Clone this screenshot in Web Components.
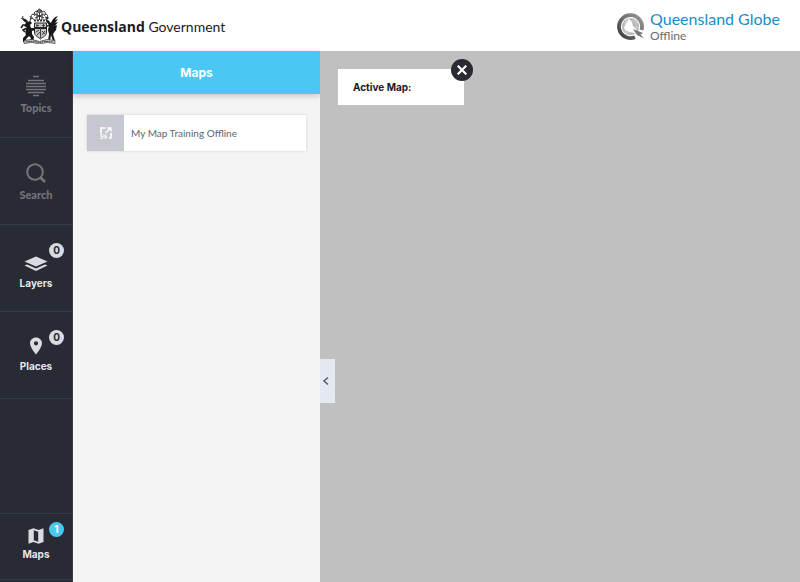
<!DOCTYPE html>
<html lang="en">
<head>
<meta charset="utf-8">
<meta name="viewport" content="width=device-width, initial-scale=1">
<title>Queensland Globe</title>
<style>
body {
	margin: 0;
	font-family: Lato, "Open Sans", sans-serif;
	font-size: 11px;
	line-height: 16px;
	--color-brand: #4bc7f4;
	--color-dark: #282b33;
	--color-light: #d9dbe3;
}
</style>
</head>
<body>
<globe-app></globe-app>

<template id="globe-app">
<style>
:host {
	display: flex;
	flex-direction: column;
	min-height: 100vh;
}
main {
	flex: 1;
	display: flex;
}
nav {
	display: flex;
	flex-direction: column;
	flex: 0 0 73px;
	box-sizing: border-box;
	padding-bottom: 2px;
	border-right: 1px solid #3a3d46;
	background: var(--color-dark);
}
nav-item:last-child {
	margin-top: auto;
}
</style>
<globe-header></globe-header>
<main>
	<nav aria-label="Tools">
		<nav-item label="Topics" muted>
			<svg width="22" height="22" viewBox="0 0 22 22" stroke="currentColor" stroke-width="1.5">
				<path d="M8 1.500H14M3 5.500H19M1 8.500H21M1 11.500H21M1 14.500H21M3 17.500H19M8 20.500H14" />
			</svg>
		</nav-item>
		<nav-item label="Search" muted>
			<svg width="22" height="22" viewBox="0 0 22 22" fill="none" stroke="currentColor" stroke-width="2">
				<circle cx="10" cy="10" r="7.800" />
				<path d="M15.500 15.500 20 20" stroke-width="2.600" />
			</svg>
		</nav-item>
		<nav-item label="Layers" count="0" wide low>
			<svg width="24" height="16" viewBox="0 0 24 16" fill="currentColor">
				<path d="M12 .5 23.500 5.500 12 10.500 .5 5.500ZM.5 9.500 3 8.400 12 12.400 21 8.400 23.500 9.500 12 15Z" />
			</svg>
		</nav-item>
		<nav-item label="Places" count="0" wide>
			<svg width="14" height="18" viewBox="0 0 14 18" fill="currentColor" fill-rule="evenodd">
				<path d="M7 .5C3.600.5 1 3 1 6.300 1 10.500 7 17.500 7 17.500S13 10.500 13 6.300C13 3 10.400.5 7 .5ZM7 4.200A2.100 2.100 0 1 1 7 8.400 2.100 2.100 0 0 1 7 4.200Z" />
			</svg>
		</nav-item>
		<nav-item label="Maps" count="1" wide active>
			<svg width="16" height="16" viewBox="0 0 16 16" fill="currentColor" fill-rule="evenodd">
				<path d="M.5 2 5.500.3 10.500 2 15.500.3V14L10.500 15.700 5.500 14 .5 15.700ZM5.800 2.300V12.200L10.200 13.700V3.800Z" />
			</svg>
		</nav-item>
	</nav>
	<map-panel heading="Maps">
		<map-card>My Map Training Offline</map-card>
	</map-panel>
	<map-view>
		<active-map>Active Map:</active-map>
	</map-view>
</main>
</template>

<template id="globe-header">
<style>
:host {
	display: block;
	background: #fff;
}
header {
	display: flex;
	justify-content: space-between;
	align-items: center;
	height: 51px;
	padding: 0 20px;
}
a {
	display: flex;
	align-items: center;
	text-decoration: none;
	font-family: Lato, sans-serif;
}
.government {
	gap: 2px;
	color: #1c1c1c;
	font-size: 14px;
	line-height: 20px;
}
.government span {
	padding-top: 3px;
}
.government b {
	font-family: "Open Sans", sans-serif;
}
.globe {
	gap: 5px;
	padding-top: 2px;
	color: #1a8dc9;
	font-size: 16px;
}
.title {
	display: flex;
	flex-direction: column;
	line-height: 18px;
}
small {
	color: #6a6a6a;
	font-size: 12px;
	line-height: 16px;
}
svg {
	display: block;
}
</style>
<header>
	<a class="government" href="#">
		<svg width="39" height="36" viewBox="0 0 39 36" aria-hidden="true">
			<!-- crest and mantling -->
			<g fill="none" stroke="#333" stroke-width="1">
				<path d="M14 11.500C10 10 11 5 14 6.500M15 8C13 4 16 2 18 4M24 8C27 4 24 2 22 4M25 11.500C29 10 28 5 25 6.500M17 12V3M22 12V3M19.500 12V1.500M15 10 24 6M15 6 24 10" />
				<path d="M14 12.500H26" stroke-width="2" stroke-dasharray="2 1" />
				<path d="M17 3 19.500 1 22 3 19.500 5Z" fill="#777" />
			</g>
			<!-- red deer -->
			<g fill="#191919">
				<path d="M3 10C3 13 5 14 6 14L5 17 4 18 6 19 7 19C5 23 5 25 6 27L3 30 3 34H6L6 31 9 28 11 30 9 34H13L14 29 12 26V23L16 22V20L11 20 10 17 12 15 10 13 8 14 7 12Z" />
				<path d="M7 20 3 22 5 24M8 17 3 17 1 20" fill="none" stroke="#191919" stroke-width="1.500" />
				<path d="M6 14C3 13 2 11 3 8M4 12 1 10M9 14C11 12 11 10 10 8M10 11 13 10" fill="none" stroke="#333" stroke-width="1" />
			</g>
			<!-- brolga -->
			<g fill="#191919">
				<path d="M38 8C34 9 32 12 31 15L28 12 26 13 29 17 28 22 29 26 28 33H30L31 27 33 33H35L33 26 36 22 37 17 35 18 38 14 35 15 38 11 35 12Z" />
				<path d="M29 15C26 14 26 11 28 10L25 9M29 17 26 19" fill="none" stroke="#191919" stroke-width="1.200" />
			</g>
			<!-- shield -->
			<path d="M14.500 15H26.500V24C26.500 28 23 29 20.500 31 18 29 14.500 28 14.500 24Z" fill="#c4c4c4" stroke="#222" />
			<path d="M15 20H26" stroke="#222" stroke-width="2" />
			<path d="M16 17.500H19M22 17.500H25M17 16V19M23.500 16V19M20.500 20V30M16 24 19 22M17 27 20 24M22 23 25 26M22 27 25 23" fill="none" stroke="#444" />
			<!-- compartment and motto -->
			<path d="M4 32.500Q12 30 19.500 33.500 27 30 35 32.500V35.500Q27 33 19.500 36 12 33 4 35.500Z" fill="#ccc" stroke="#333" stroke-width=".7" />
			<path d="M6 34Q13 32.500 19.500 34.700 26 32.500 33 34" fill="none" stroke="#222" stroke-dasharray="1.500 .8" />
		</svg>
		<span><b>Queensland</b> Government</span>
	</a>
	<a class="globe" href="#">
		<svg width="28" height="28" viewBox="0 0 28 28" aria-hidden="true">
			<defs>
				<linearGradient id="ring" x1="1" y1="0" x2="0" y2="1">
					<stop offset="0" stop-color="#999" />
					<stop offset="1" stop-color="#3c3c3c" />
				</linearGradient>
			</defs>
			<circle cx="13.500" cy="13.500" r="8.600" fill="#b4b4b4" />
			<path d="M6 10Q13 5 21 10M5 14H22M6 18Q13 22 20 18M10 5Q6 14 10 22M17 5Q21 13 18 20" fill="none" stroke="#d5d5d5" stroke-width=".8" />
			<path d="M12 4.500 13.500 8 15 9 16 13 19 16 20 20.500 9 18 7 15 9 10 11 8Z" fill="#fff" />
			<path d="M18 24.200A11.500 11.500 0 1 1 24.500 17" fill="none" stroke="url(#ring)" stroke-width="3.800" />
			<path d="M16 16 26 20 23.500 21.500 27 25.500 20 22Z" fill="#777" />
		</svg>
		<span class="title">Queensland Globe<small>Offline</small></span>
	</a>
</header>
</template>

<template id="nav-item">
<style>
:host {
	display: block;
	height: 86px;
	border-bottom: 1px solid #363a49;
	color: var(--color-light);
}
:host([muted]) {
	color: #73757d;
}
:host([active]) {
	height: 65px;
	border-top: 1px solid #363a49;
}
button {
	position: relative;
	display: flex;
	flex-direction: column;
	align-items: center;
	justify-content: center;
	gap: 3px;
	width: 100%;
	height: 100%;
	padding: 0;
	border: none;
	background: transparent;
	color: inherit;
	font: 900 11px/16px Lato, sans-serif;
	cursor: pointer;
}
:host([muted]) button {
	padding-top: 2px;
}
:host([wide]) button {
	font: 700 10px/16px Inter, sans-serif;
}
:host([low]) button {
	padding-top: 10px;
}
:host([active]) button {
	gap: 2px;
	padding-bottom: 4px;
}
.count {
	position: absolute;
	top: 18px;
	right: 8px;
	width: 15px;
	height: 15px;
	border-radius: 50%;
	background: var(--color-light);
	color: var(--color-dark);
	line-height: 15px;
}
:host([active]) .count {
	top: 8px;
	background: var(--color-brand);
	color: #fff;
}
.count:empty {
	display: none;
}
:host([wide]) .label {
	color: #e4e6ee;
}
</style>
<button type="button"><slot></slot><span class="label"></span><span class="count"></span></button>
</template>

<template id="map-panel">
<style>
:host {
	display: block;
	flex: 0 0 247px;
	background: #f4f4f4;
}
h1 {
	margin: 0;
	background: var(--color-brand);
	box-shadow: 0 2px 6px rgba(0, 0, 0, 0.2);
	color: #fff;
	font: 700 12px/43px Inter, sans-serif;
	text-align: center;
}
div {
	padding: 21px 14px;
}
</style>
<h1></h1>
<div><slot></slot></div>
</template>

<template id="map-card">
<style>
:host {
	display: block;
}
button {
	display: flex;
	align-items: center;
	width: 100%;
	height: 36px;
	padding: 0;
	border: none;
	background: #fff;
	box-shadow: 0 0 3px rgba(0, 0, 0, 0.15);
	color: #5d6470;
	font: 10px/16px Lato, sans-serif;
	cursor: pointer;
}
.thumb {
	display: flex;
	align-items: center;
	justify-content: center;
	width: 37px;
	height: 36px;
	margin-right: 7px;
	background: #c5c8d0;
}
</style>
<button type="button">
	<span class="thumb">
		<svg width="12" height="12" viewBox="0 0 12 12" fill="none" stroke="#fff" aria-hidden="true">
			<path d="M5.500 1H1V6.500M11 6V11H9" stroke-width="1.600" />
			<path d="M5.500 6 10 1.500M7.500 1H11V4.500" stroke-width="1.400" />
			<path d="M0 8H3.500M1 9.500H3.500M0 11.200H3.500M5 7.500V12M6.500 8.500V11" stroke-width="1" />
		</svg>
	</span>
	<slot></slot>
</button>
</template>

<template id="map-view">
<style>
:host {
	position: relative;
	display: block;
	flex: 1;
	background: #c0c0c0;
	padding: 18px;
}
button {
	position: absolute;
	top: 58%;
	left: 0;
	display: flex;
	align-items: center;
	width: 15px;
	height: 44px;
	padding: 0 2px;
	border: none;
	background: #e4e8f1;
	cursor: pointer;
}
</style>
<slot></slot>
<button type="button" aria-label="Collapse panel">
	<svg width="8" height="10" viewBox="0 0 8 10" fill="none" stroke="#5a5f6e" stroke-width="1.600"><path d="M6 1.500 2 5 6 8.500" /></svg>
</button>
</template>

<template id="active-map">
<style>
:host {
	position: relative;
	display: block;
	width: fit-content;
	min-width: 126px;
	box-sizing: border-box;
	padding: 10px 15px;
	background: #fff;
	color: #1b1b1b;
	font: 700 10px/16px Inter, sans-serif;
}
button {
	position: absolute;
	top: -10px;
	right: -9px;
	display: flex;
	align-items: center;
	justify-content: center;
	width: 22px;
	height: 22px;
	padding: 0;
	border: none;
	border-radius: 50%;
	background: var(--color-dark);
	cursor: pointer;
}
</style>
<slot></slot>
<button type="button" aria-label="Close active map">
	<svg width="10" height="10" viewBox="0 0 10 10" stroke="#fff" stroke-width="2.200"><path d="M.7.7 9.300 9.300M9.300.7.7 9.300" /></svg>
</button>
</template>

<script>
class BaseElement extends HTMLElement {
	constructor() {
		super();
		const template = document.getElementById(this.localName);
		this.attachShadow({ mode: "open" }).appendChild(template.content.cloneNode(true));
	}
}

class NavItemElement extends BaseElement {
	connectedCallback() {
		this.shadowRoot.querySelector(".label").textContent = this.getAttribute("label");
		this.shadowRoot.querySelector(".count").textContent = this.getAttribute("count") || "";
	}
}

class MapPanelElement extends BaseElement {
	connectedCallback() {
		this.shadowRoot.querySelector("h1").textContent = this.getAttribute("heading");
	}
}

class ActiveMapElement extends BaseElement {
	connectedCallback() {
		this.shadowRoot.querySelector("button").addEventListener("click", () => this.remove());
	}
}

class MapViewElement extends BaseElement {
	connectedCallback() {
		this.shadowRoot.querySelector("button").addEventListener("click", () => {
			const panel = this.previousElementSibling;
			panel.style.display = panel.style.display ? "" : "none";
		});
	}
}

customElements.define("nav-item", NavItemElement);
customElements.define("map-card", class extends BaseElement {});
customElements.define("map-panel", MapPanelElement);
customElements.define("active-map", ActiveMapElement);
customElements.define("map-view", MapViewElement);
customElements.define("globe-header", class extends BaseElement {});
customElements.define("globe-app", class extends BaseElement {});
</script>
</body>
</html>
